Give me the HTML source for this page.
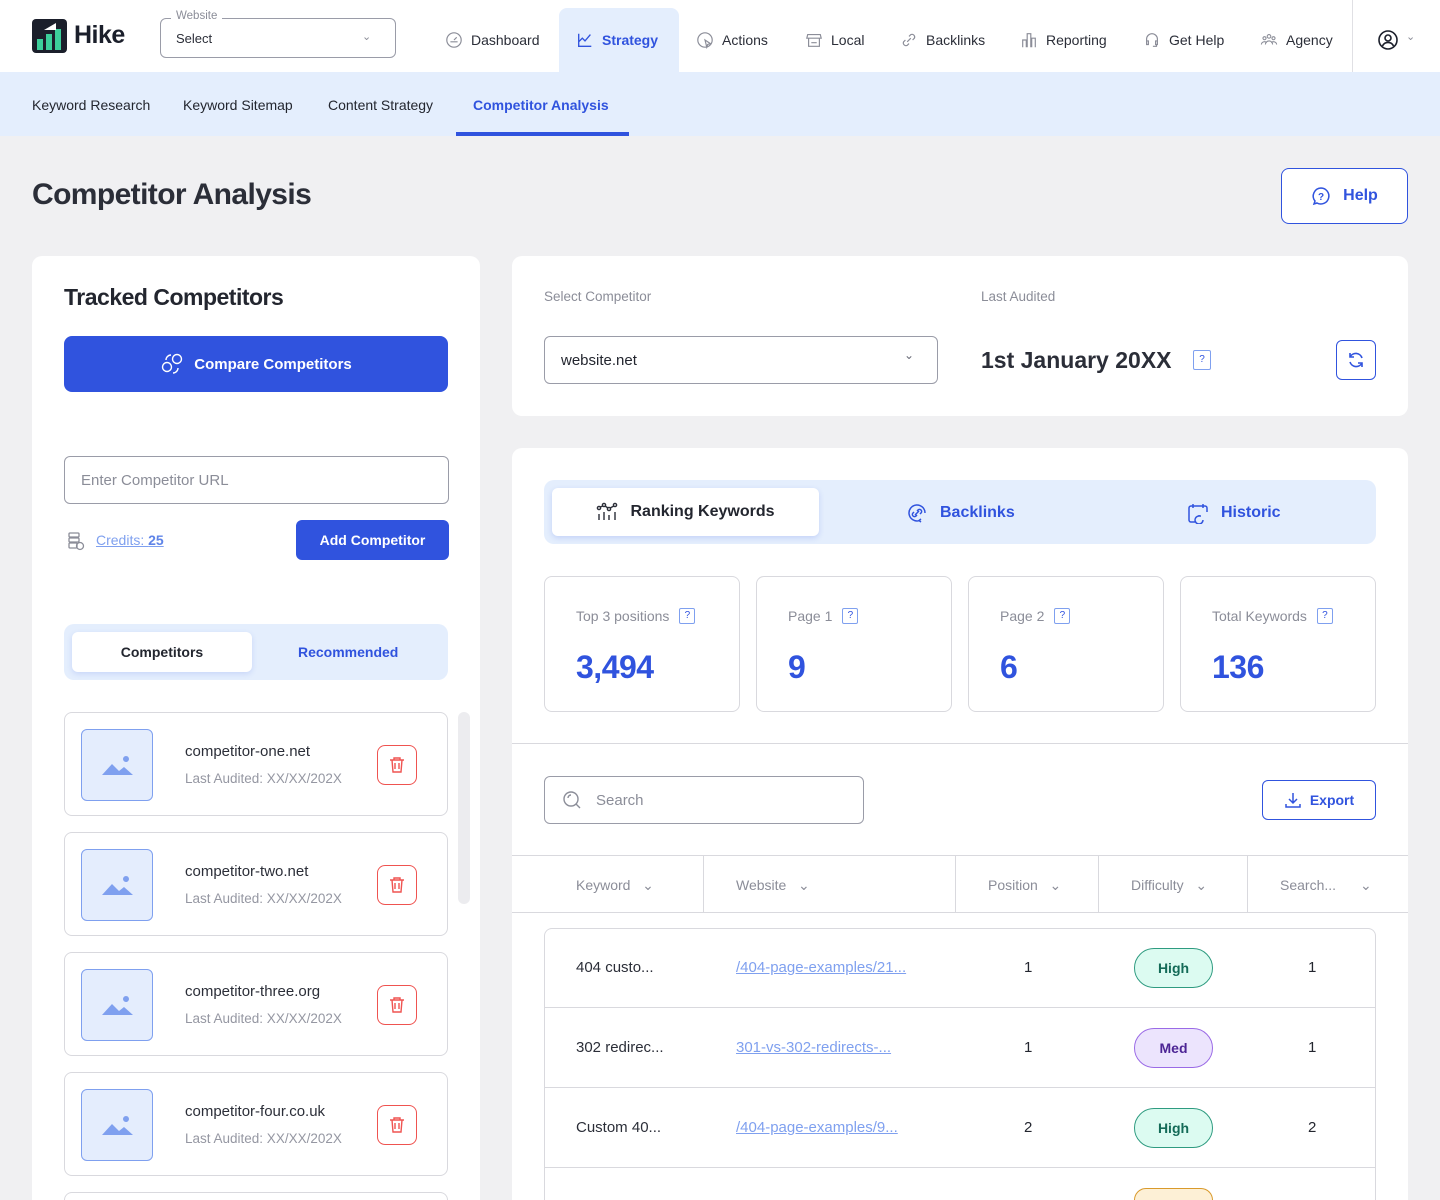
<!DOCTYPE html>
<html style="width:1440px;height:1200px;overflow:hidden"><head><meta charset="utf-8"><style>
*{box-sizing:border-box;margin:0;padding:0}
body{width:1440px;height:1200px;overflow:hidden;background:#f0f0f2;font-family:"Liberation Sans",sans-serif;color:#23262f;position:relative}
.a{position:absolute}
.nav{font-size:14px;color:#2b2e38;display:flex;align-items:center;gap:8px;top:31px}
.nav svg{width:18px;height:18px}
.card{background:#fff;border-radius:10px}
.blue{color:#3053de}
.btn{background:#3053de;color:#fff;border-radius:8px;display:flex;align-items:center;justify-content:center;font-weight:bold}
.stat{border:1px solid #d9d9de;border-radius:8px;background:#fff;width:196px;height:136px;top:576px}
.stat .l{position:absolute;left:31px;top:31px;font-size:14px;color:#8b8d98;display:flex;gap:10px;align-items:center}
.stat .v{position:absolute;left:31px;top:72px;font-size:32px;font-weight:bold;color:#3053de;letter-spacing:-0.5px}
.q{display:inline-block;width:16px;height:16px;border:1.5px solid #7fa0ef;border-radius:2px;font-size:10px;color:#3053de;text-align:center;line-height:13px}
.item{left:64px;width:384px;height:104px;border:1px solid #d9d9de;border-radius:8px;background:#fff}
.thumb{position:absolute;left:16px;top:16px;width:72px;height:72px;background:#e4edfd;border:1px solid #7fa0ef;border-radius:6px}
.item .n{position:absolute;left:120px;top:30px;font-size:15px;color:#2b2e38}
.item .d{position:absolute;left:120px;top:58px;font-size:13.5px;color:#9597a2}
.trash{position:absolute;left:312px;top:32px;width:40px;height:40px;border:1px solid #ef5350;border-radius:8px;display:flex;align-items:center;justify-content:center}
.th{top:877px;font-size:14px;color:#8b8d98}
.row{left:544px;width:832px;height:80px;border-bottom:1px solid #d9d9de}
.row span{position:absolute;top:31px;font-size:15px}
.row .k{left:32px;color:#2b2e38}
.row .w{left:192px;color:#7fa0ef;text-decoration:underline}
.row .p{left:480px}
.row .s{left:764px}
.pill{position:absolute;left:590px;top:20px;width:79px;height:40px;border-radius:20px;font-size:14px;font-weight:bold;display:flex;align-items:center;justify-content:center}
.hi{background:#dcfbf1;border:1px solid #2e9b80;color:#146b58}
.me{background:#ece4fd;border:1px solid #9a6ae6;color:#4d2595}
</style></head><body>
<!-- header -->
<div class="a" style="left:0;top:0;width:1440px;height:72px;background:#fff"></div>
<div class="a" style="left:32px;top:19px;width:35px;height:34px;background:#1b1f2b;border-radius:4px">
<div class="a" style="left:5px;top:20px;width:6px;height:11px;background:#3ccf9a"></div>
<div class="a" style="left:14px;top:15px;width:6px;height:16px;background:#3ccf9a"></div>
<div class="a" style="left:23px;top:10px;width:6px;height:21px;background:#3ccf9a"></div>
<div class="a" style="left:12px;top:4px;width:0;height:0;border-left:12px solid transparent;border-bottom:7px solid #fff"></div>
</div>
<div class="a" style="left:74px;top:21px;font-size:25px;font-weight:900;color:#1b1f2b;letter-spacing:-0.5px">Hike</div>
<div class="a" style="left:160px;top:18px;width:236px;height:40px;border:1px solid #9a9ca8;border-radius:6px"></div>
<div class="a" style="left:171px;top:10px;background:#fff;padding:0 5px;font-size:11.5px;color:#8b8d98">Website</div>
<div class="a" style="left:176px;top:31px;font-size:13px;color:#2b2e38">Select</div>
<div class="a" style="left:362px;top:30px;font-size:11px;color:#8b8d98">⌄</div>
<div class="a" style="left:559px;top:8px;width:120px;height:64px;background:#e4eefd;border-radius:8px 8px 0 0"></div>
<div class="a nav" style="left:445px"><svg viewBox="0 0 20 20" fill="none" stroke="#8b8d98" stroke-width="1.3"><circle cx="10" cy="10" r="8"/><path d="M10 10l3-3M6 12h8"/></svg>Dashboard</div>
<div class="a nav blue" style="left:576px;font-weight:bold"><svg viewBox="0 0 20 20" fill="none" stroke="#3053de" stroke-width="1.5"><path d="M3 3v14h14M3 12l4-4 3 3 6-7"/></svg>Strategy</div>
<div class="a nav" style="left:696px"><svg viewBox="0 0 20 20" fill="none" stroke="#8b8d98" stroke-width="1.3"><circle cx="10" cy="10" r="8"/><path d="M10 10l6 4-3 1-1 3z"/></svg>Actions</div>
<div class="a nav" style="left:805px"><svg viewBox="0 0 20 20" fill="none" stroke="#8b8d98" stroke-width="1.3"><path d="M3 4h14l1 4H2zM4 8v9h12V8M7 13h6"/></svg>Local</div>
<div class="a nav" style="left:900px"><svg viewBox="0 0 20 20" fill="none" stroke="#8b8d98" stroke-width="1.3"><path d="M8 12l4-4M6 10l-2 2a3 3 0 004 4l2-2M14 10l2-2a3 3 0 00-4-4l-2 2"/></svg>Backlinks</div>
<div class="a nav" style="left:1020px"><svg viewBox="0 0 20 20" fill="none" stroke="#8b8d98" stroke-width="1.3"><path d="M3 18V10h4v8M8 18V3h4v15M13 18V8h4v10"/></svg>Reporting</div>
<div class="a nav" style="left:1143px"><svg viewBox="0 0 20 20" fill="none" stroke="#8b8d98" stroke-width="1.3"><path d="M4 12V9a6 6 0 0112 0v3M4 11h2v4H4zM14 11h2v4h-2zM15 15v2h-4"/></svg>Get Help</div>
<div class="a nav" style="left:1260px"><svg viewBox="0 0 20 20" fill="none" stroke="#8b8d98" stroke-width="1.2"><circle cx="10" cy="6" r="2"/><circle cx="5" cy="8" r="1.7"/><circle cx="15" cy="8" r="1.7"/><path d="M6 15a4 4 0 018 0M1.5 15a3.5 3.5 0 016-2M18.5 15a3.5 3.5 0 00-6-2"/></svg>Agency</div>
<div class="a" style="left:1352px;top:0;width:1px;height:72px;background:#e0e0e4"></div>
<svg class="a" style="left:1377px;top:29px" width="22" height="22" viewBox="0 0 22 22" fill="none" stroke="#1b1f2b" stroke-width="1.6"><circle cx="11" cy="11" r="9"/><circle cx="11" cy="9" r="3"/><path d="M5.5 17a6 6 0 0111 0"/></svg>
<div class="a" style="left:1406px;top:30px;font-size:11px;color:#8b8d98">⌄</div>
<!-- subnav -->
<div class="a" style="left:0;top:72px;width:1440px;height:64px;background:#e4eefd"></div>
<div class="a" style="left:32px;top:97px;font-size:14px;color:#23262f">Keyword Research</div>
<div class="a" style="left:183px;top:97px;font-size:14px;color:#23262f">Keyword Sitemap</div>
<div class="a" style="left:328px;top:97px;font-size:14px;color:#23262f">Content Strategy</div>
<div class="a blue" style="left:473px;top:97px;font-size:14px;font-weight:bold">Competitor Analysis</div>
<div class="a" style="left:456px;top:132px;width:173px;height:4px;background:#3053de"></div>
<!-- title -->
<div class="a" style="left:32px;top:178px;font-size:30px;font-weight:bold;color:#2b2e38;letter-spacing:-0.6px">Competitor Analysis</div>
<div class="a" style="left:1281px;top:168px;width:127px;height:56px;border:1.5px solid #3053de;border-radius:8px;background:#fff;display:flex;align-items:center;justify-content:center;gap:12px;font-size:16px;font-weight:bold;color:#3053de"><svg width="20" height="20" viewBox="0 0 20 20" fill="none" stroke="#3053de" stroke-width="1.5"><path d="M10 2a8 8 0 11-4 15l-3 1 1-3A8 8 0 0110 2z"/><text x="10" y="14" font-size="10" fill="#3053de" stroke="none" text-anchor="middle" font-family="Liberation Sans">?</text></svg>Help</div>
<!-- left card -->
<div class="a card" style="left:32px;top:256px;width:448px;height:944px;border-radius:10px 10px 0 0"></div>
<div class="a" style="left:64px;top:284px;font-size:23px;font-weight:bold;color:#23262f;letter-spacing:-0.5px">Tracked Competitors</div>
<div class="a btn" style="left:64px;top:336px;width:384px;height:56px;font-size:15px;gap:10px"><svg width="24" height="24" viewBox="0 0 24 24" fill="none" stroke="#fff" stroke-width="1.4"><circle cx="7" cy="15" r="4.5"/><circle cx="17" cy="7" r="4.5"/><path d="M6 8a5 5 0 015-5M18 16a5 5 0 01-5 5"/></svg>Compare Competitors</div>
<div class="a" style="left:64px;top:456px;width:385px;height:48px;border:1px solid #9a9ca8;border-radius:6px;font-size:15px;color:#8b8d98;padding:15px 16px">Enter Competitor URL</div>
<svg class="a" style="left:67px;top:531px" width="18" height="20" viewBox="0 0 18 20" fill="none" stroke="#8b8d98" stroke-width="1.3"><rect x="2" y="2" width="10" height="4" rx="1"/><rect x="2" y="7" width="10" height="4" rx="1"/><rect x="2" y="12" width="8" height="5" rx="1"/><circle cx="13" cy="15" r="3.5"/></svg>
<div class="a" style="left:96px;top:532px;font-size:14px;color:#7fa0ef;text-decoration:underline">Credits: <b style="color:#5f84e8">25</b></div>
<div class="a btn" style="left:296px;top:520px;width:153px;height:40px;font-size:14px;border-radius:6px">Add Competitor</div>
<div class="a" style="left:64px;top:624px;width:384px;height:56px;background:#e4eefd;border-radius:10px"></div>
<div class="a" style="left:72px;top:632px;width:180px;height:40px;background:#fff;border-radius:6px;box-shadow:0 2px 6px rgba(48,83,222,.15);display:flex;align-items:center;justify-content:center;font-size:14px;font-weight:bold">Competitors</div>
<div class="a blue" style="left:298px;top:644px;font-size:14px;font-weight:bold">Recommended</div>
<div class="a" style="left:458px;top:712px;width:12px;height:192px;background:#ececef;border-radius:6px"></div>
<div class="a item" style="top:712px"><div class="thumb"><svg class="a" style="left:19px;top:25px" width="34" height="22" viewBox="0 0 34 22"><circle cx="25" cy="4" r="3" fill="#7fa0ef"/><path d="M1 20l10-11 7 7 5-4 9 8z" fill="#7fa0ef"/></svg></div><div class="n">competitor-one.net</div><div class="d">Last Audited: XX/XX/202X</div><div class="trash"><svg width="16" height="18" viewBox="0 0 16 18" fill="none" stroke="#ef5350" stroke-width="1.4"><path d="M1 4h14M5 4V2h6v2M3 4l1 12h8l1-12M6 7v6M10 7v6"/></svg></div></div>
<div class="a item" style="top:832px"><div class="thumb"><svg class="a" style="left:19px;top:25px" width="34" height="22" viewBox="0 0 34 22"><circle cx="25" cy="4" r="3" fill="#7fa0ef"/><path d="M1 20l10-11 7 7 5-4 9 8z" fill="#7fa0ef"/></svg></div><div class="n">competitor-two.net</div><div class="d">Last Audited: XX/XX/202X</div><div class="trash"><svg width="16" height="18" viewBox="0 0 16 18" fill="none" stroke="#ef5350" stroke-width="1.4"><path d="M1 4h14M5 4V2h6v2M3 4l1 12h8l1-12M6 7v6M10 7v6"/></svg></div></div>
<div class="a item" style="top:952px"><div class="thumb"><svg class="a" style="left:19px;top:25px" width="34" height="22" viewBox="0 0 34 22"><circle cx="25" cy="4" r="3" fill="#7fa0ef"/><path d="M1 20l10-11 7 7 5-4 9 8z" fill="#7fa0ef"/></svg></div><div class="n">competitor-three.org</div><div class="d">Last Audited: XX/XX/202X</div><div class="trash"><svg width="16" height="18" viewBox="0 0 16 18" fill="none" stroke="#ef5350" stroke-width="1.4"><path d="M1 4h14M5 4V2h6v2M3 4l1 12h8l1-12M6 7v6M10 7v6"/></svg></div></div>
<div class="a item" style="top:1072px"><div class="thumb"><svg class="a" style="left:19px;top:25px" width="34" height="22" viewBox="0 0 34 22"><circle cx="25" cy="4" r="3" fill="#7fa0ef"/><path d="M1 20l10-11 7 7 5-4 9 8z" fill="#7fa0ef"/></svg></div><div class="n">competitor-four.co.uk</div><div class="d">Last Audited: XX/XX/202X</div><div class="trash"><svg width="16" height="18" viewBox="0 0 16 18" fill="none" stroke="#ef5350" stroke-width="1.4"><path d="M1 4h14M5 4V2h6v2M3 4l1 12h8l1-12M6 7v6M10 7v6"/></svg></div></div>
<div class="a item" style="top:1192px;height:8px;border-bottom:none;border-radius:8px 8px 0 0"></div>
<!-- right top card -->
<div class="a card" style="left:512px;top:256px;width:896px;height:160px"></div>
<div class="a" style="left:544px;top:289px;font-size:13.5px;color:#8b8d98">Select Competitor</div>
<div class="a" style="left:981px;top:289px;font-size:13.5px;color:#8b8d98">Last Audited</div>
<div class="a" style="left:544px;top:336px;width:394px;height:48px;border:1px solid #9a9ca8;border-radius:6px;font-size:15px;padding:15px 16px">website.net</div>
<div class="a" style="left:904px;top:348px;font-size:12px;color:#6a6c78">⌄</div>
<div class="a" style="left:981px;top:347px;font-size:23px;font-weight:bold;color:#2b2e38">1st January 20XX</div>
<div class="a q" style="left:1193px;top:350px;width:18px;height:20px;line-height:17px">?</div>
<div class="a" style="left:1336px;top:340px;width:40px;height:40px;border:1.5px solid #3053de;border-radius:6px;display:flex;align-items:center;justify-content:center"><svg width="18" height="18" viewBox="0 0 18 18" fill="none" stroke="#3053de" stroke-width="1.6"><path d="M15 7A6.5 6.5 0 003 6M3 11a6.5 6.5 0 0012 1M3 2v4h4M15 16v-4h-4"/></svg></div>
<!-- right main card -->
<div class="a card" style="left:512px;top:448px;width:896px;height:752px;border-radius:10px 10px 0 0"></div>
<div class="a" style="left:544px;top:480px;width:832px;height:64px;background:#e4eefd;border-radius:10px"></div>
<div class="a" style="left:552px;top:488px;width:267px;height:48px;background:#fff;border-radius:6px;box-shadow:0 2px 6px rgba(48,83,222,.18);display:flex;align-items:center;justify-content:center;gap:12px;font-size:16px;font-weight:bold"><svg width="22" height="20" viewBox="0 0 22 20" fill="none" stroke="#2b2e38" stroke-width="1.4"><circle cx="3" cy="6" r="1.6"/><circle cx="8" cy="3" r="1.6"/><circle cx="13" cy="7" r="1.6"/><circle cx="19" cy="3" r="1.6"/><path d="M4 5l3-1M9 4l3 2M14 6l4-2M3 12v6M8 10v8M13 13v5M19 10v8"/></svg>Ranking Keywords</div>
<div class="a blue" style="left:906px;top:502px;display:flex;gap:12px;align-items:center;font-size:16px;font-weight:bold"><svg width="22" height="22" viewBox="0 0 22 22" fill="none" stroke="#3053de" stroke-width="1.5"><path d="M19 11a8 8 0 10-6 7.7"/><path d="M9 13l4-4M8 10l-1 1a2 2 0 003 3l1-1M14 12l1-1a2 2 0 00-3-3l-1 1M15 20l-2-1.5 2-1.5"/></svg>Backlinks</div>
<div class="a blue" style="left:1187px;top:502px;display:flex;gap:12px;align-items:center;font-size:16px;font-weight:bold"><svg width="22" height="22" viewBox="0 0 22 22" fill="none" stroke="#3053de" stroke-width="1.5"><path d="M8 20H4a2 2 0 01-2-2V6a2 2 0 012-2h14a2 2 0 012 2v4M6 2v4M16 2v4M12 14a4 4 0 104 4M12 14v-1M12 14h2"/></svg>Historic</div>
<div class="a stat" style="left:544px"><div class="l">Top 3 positions <span class="q">?</span></div><div class="v">3,494</div></div>
<div class="a stat" style="left:756px"><div class="l">Page 1 <span class="q">?</span></div><div class="v">9</div></div>
<div class="a stat" style="left:968px"><div class="l">Page 2 <span class="q">?</span></div><div class="v">6</div></div>
<div class="a stat" style="left:1180px"><div class="l">Total Keywords <span class="q">?</span></div><div class="v">136</div></div>
<div class="a" style="left:512px;top:743px;width:896px;height:1px;background:#d9d9de"></div>
<div class="a" style="left:544px;top:776px;width:320px;height:48px;border:1px solid #9a9ca8;border-radius:6px"></div>
<svg class="a" style="left:562px;top:790px" width="20" height="20" viewBox="0 0 20 20" fill="none" stroke="#8b8d98" stroke-width="1.4"><circle cx="9" cy="9" r="7"/><path d="M14 14l4 4M6 8a3 3 0 013-3"/></svg>
<div class="a" style="left:596px;top:792px;font-size:15px;color:#8b8d98">Search</div>
<div class="a" style="left:1262px;top:780px;width:114px;height:40px;border:1.5px solid #3053de;border-radius:6px;display:flex;align-items:center;justify-content:center;gap:8px;font-size:14px;font-weight:bold;color:#3053de"><svg width="18" height="18" viewBox="0 0 18 18" fill="none" stroke="#3053de" stroke-width="1.5"><path d="M9 2v10M5 8l4 4 4-4M2 13v3h14v-3"/></svg>Export</div>
<div class="a" style="left:512px;top:855px;width:896px;height:58px;border-top:1px solid #d9d9de;border-bottom:1px solid #d9d9de"></div>
<div class="a" style="left:703px;top:856px;width:1px;height:56px;background:#d9d9de"></div>
<div class="a" style="left:955px;top:856px;width:1px;height:56px;background:#d9d9de"></div>
<div class="a" style="left:1098px;top:856px;width:1px;height:56px;background:#d9d9de"></div>
<div class="a" style="left:1247px;top:856px;width:1px;height:56px;background:#d9d9de"></div>
<div class="a th" style="left:576px">Keyword &nbsp;&nbsp;⌄</div>
<div class="a th" style="left:736px">Website &nbsp;&nbsp;⌄</div>
<div class="a th" style="left:988px">Position &nbsp;&nbsp;⌄</div>
<div class="a th" style="left:1131px">Difficulty &nbsp;&nbsp;⌄</div>
<div class="a th" style="left:1280px">Search... <span style="position:absolute;left:80px">⌄</span></div>
<div class="a" style="left:544px;top:928px;width:832px;height:272px;border:1px solid #d9d9de;border-bottom:none;border-radius:8px 8px 0 0"></div>
<div class="a row" style="top:928px"><span class="k">404 custo...</span><span class="w">/404-page-examples/21...</span><span class="p">1</span><div class="pill hi">High</div><span class="s">1</span></div>
<div class="a row" style="top:1008px"><span class="k">302 redirec...</span><span class="w">301-vs-302-redirects-...</span><span class="p">1</span><div class="pill me">Med</div><span class="s">1</span></div>
<div class="a row" style="top:1088px"><span class="k">Custom 40...</span><span class="w">/404-page-examples/9...</span><span class="p">2</span><div class="pill hi">High</div><span class="s">2</span></div>
<div class="a" style="left:1134px;top:1188px;width:79px;height:12px;border-radius:20px 20px 0 0;background:#fdf0d6;border:1px solid #d99a2b;border-bottom:none"></div>
</body></html>
